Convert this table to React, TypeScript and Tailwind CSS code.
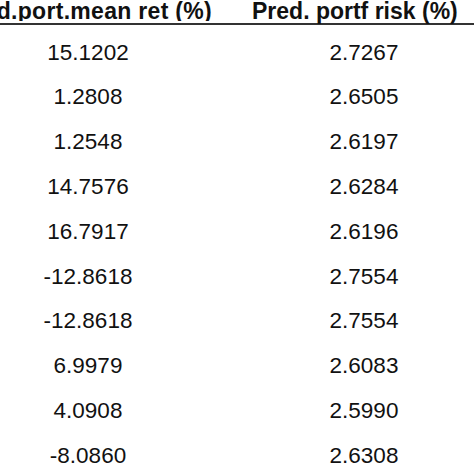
const rows: [string, string][] = [
  ["15.1202", "2.7267"],
  ["1.2808", "2.6505"],
  ["1.2548", "2.6197"],
  ["14.7576", "2.6284"],
  ["16.7917", "2.6196"],
  ["-12.8618", "2.7554"],
  ["-12.8618", "2.7554"],
  ["6.9979", "2.6083"],
  ["4.0908", "2.5990"],
  ["-8.0860", "2.6308"],
];

export default function App() {
  return (
    <div
      className="w-[474px] h-[474px] overflow-hidden bg-white text-[#111]"
      style={{ fontFamily: '"Liberation Sans", Arial, sans-serif' }}
    >
      <div className="flex border-b-2 border-[#333] pt-[1px] pb-[2px] text-[23px] leading-[20px] font-bold">
        <div className="w-[212px] flex justify-end overflow-hidden whitespace-nowrap">
          <span className="tracking-[0.3px]">Pred.port.mean ret (%)</span>
        </div>
        <div className="ml-[40px] whitespace-nowrap">Pred. portf risk (%)</div>
      </div>
      <div className="pt-[5px]">
        {rows.map(([ret, risk], i) => (
          <div key={i} className="flex h-[44.8px] items-center text-[22.5px]">
            <div className="w-[176px] text-center">{ret}</div>
            <div className="ml-[100px] w-[176px] text-center">{risk}</div>
          </div>
        ))}
      </div>
    </div>
  );
}
